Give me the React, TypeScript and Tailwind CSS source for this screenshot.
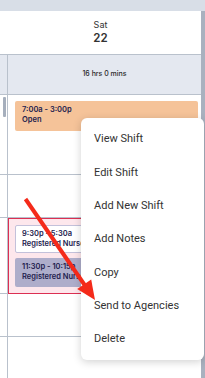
import React from "react";

const menuItems = [
  "View Shift",
  "Edit Shift",
  "Add New Shift",
  "Add Notes",
  "Copy",
  "Send to Agencies",
  "Delete",
];

function Gutter({ children }: { children?: React.ReactNode }) {
  return <div className="w-[8px] shrink-0 border-r border-[#b9c1cc]">{children}</div>;
}

export default function App() {
  return (
    <div className="relative w-[205px] h-[378px] overflow-hidden bg-white font-[family-name:Inter,sans-serif]">
      <div className="h-[11px] bg-[#d8dee7]" />
      <div className="flex h-[367px]">
        <div className="flex-1 flex flex-col">
          {/* header */}
          <div className="h-[44px] shrink-0 border-b border-[#b9c1cc] flex flex-col items-center justify-center text-[#333]">
            <div className="text-[9px] leading-[12px]">Sat</div>
            <div className="text-[11.5px] leading-[15px] font-semibold">22</div>
          </div>
          {/* totals row */}
          <div className="h-[40px] shrink-0 border-b border-[#b9c1cc] bg-[#e4e8f0] flex">
            <Gutter />
            <div className="flex-1 flex items-center justify-center text-[7px] font-medium text-[#2a2a2a]">
              16 hrs 0 mins
            </div>
          </div>
          {/* row 1 */}
          <div className="h-[80px] shrink-0 border-b border-[#b9c1cc] flex">
            <Gutter>
              <div className="ml-[3px] mt-[2px] w-[3px] h-[20px] bg-[#a6afbd] rounded-[1px]" />
            </Gutter>
            <div className="flex-1 pl-[7px] pr-[3px] pt-[6px]">
              <div className="h-[30px] bg-[#f5c399] rounded-[2px] pl-[7px] pt-[4px] text-[#22204d] text-[7.5px] leading-[10px] font-semibold">
                <div>7:00a - 3:00p</div>
                <div>Open</div>
              </div>
            </div>
          </div>
          {/* row 2 */}
          <div className="h-[43px] shrink-0 border-b border-[#b9c1cc] flex">
            <Gutter />
            <div className="flex-1" />
          </div>
          {/* row 3 */}
          <div className="h-[76px] shrink-0 border-b border-[#b9c1cc] flex">
            <Gutter />
            <div className="flex-1 -mb-[1px] border border-[#dc2f52] bg-[#fde7ec] pl-[6px] pr-[3px] pt-[6px] flex flex-col gap-[5px]">
              <div className="h-[28px] bg-white border border-[#c3c1da] rounded-[2px] pl-[6px] pt-[3px] text-[#22204d] text-[7.5px] leading-[10px] font-semibold">
                <div>9:30p - 5:30a</div>
                <div>Registered Nurse</div>
              </div>
              <div className="h-[29px] bg-[#aeadca] rounded-[2px] pl-[7px] pt-[4px] text-[#22204d] text-[7.5px] leading-[10px] font-semibold">
                <div>11:30p - 10:15p</div>
                <div>Registered Nurse</div>
              </div>
            </div>
          </div>
          {/* row 4 */}
          <div className="h-[43px] shrink-0 border-b border-[#b9c1cc] flex">
            <Gutter />
            <div className="flex-1" />
          </div>
          {/* row 5 */}
          <div className="flex-1 flex">
            <Gutter />
            <div className="flex-1" />
          </div>
        </div>
        <div className="w-[4px] shrink-0 bg-[#a9b1bf]" />
      </div>

      {/* context menu */}
      <div className="absolute left-[81px] top-[118px] w-[123px] bg-white rounded-[6px] shadow-[0_2px_8px_rgba(0,0,0,0.18)] pt-[5px] pb-[4px] font-[family-name:Roboto,sans-serif]">
        {menuItems.map((item) => (
          <div key={item} className="h-[33.33px] flex items-center pl-[13px] text-[11px] text-[#333]">
            {item}
          </div>
        ))}
      </div>

      {/* red arrow */}
      <svg className="absolute inset-0 pointer-events-none" width="205" height="378" viewBox="0 0 205 378">
        <line x1="25.5" y1="199" x2="86" y2="287" stroke="#f42a1a" strokeWidth="4" />
        <polygon points="95,300 91.2,279.5 77.2,289.1" fill="#f42a1a" />
      </svg>
    </div>
  );
}
